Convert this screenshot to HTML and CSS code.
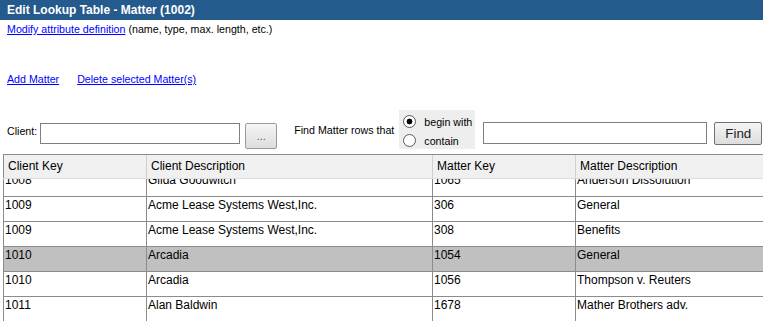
FILE: index.html
```html
<!DOCTYPE html>
<html lang="en">
<head>
  <meta charset="UTF-8">
  <title>Edit Lookup Table - Matter (1002)</title>
  <link rel="stylesheet" href="styles.css">
</head>
<body>
  <div class="title-bar">Edit Lookup Table - Matter (1002)</div>
  <div class="attr-line"><a href="#">Modify attribute definition</a> (name, type, max. length, etc.)</div>
  <div class="actions">
    <a href="#">Add Matter</a>
    <a href="#">Delete selected Matter(s)</a>
  </div>

  <div class="search-bar">
    <label class="client-label" for="client">Client:</label>
    <input type="text" id="client" class="client-input">
    <button class="browse-btn">...</button>
    <span class="find-label">Find Matter rows that</span>
    <div class="match-mode">
      <label><input type="radio" name="mode" checked><span>begin with</span></label>
      <label><input type="radio" name="mode"><span>contain</span></label>
    </div>
    <input type="text" class="find-input">
    <button class="find-btn">Find</button>
  </div>

  <!-- Lookup grid -->
  <div class="grid">
    <div class="grid-row grid-head">
      <div>Client Key</div>
      <div>Client Description</div>
      <div>Matter Key</div>
      <div>Matter Description</div>
    </div>
    <div class="grid-body">
      <div class="grid-rows">
        <div class="grid-row"><div>1008</div><div>Gilda Goodwitch</div><div>1065</div><div>Anderson Dissolution</div></div>
        <div class="grid-row"><div>1009</div><div>Acme Lease Systems West,Inc.</div><div>306</div><div>General</div></div>
        <div class="grid-row"><div>1009</div><div>Acme Lease Systems West,Inc.</div><div>308</div><div>Benefits</div></div>
        <div class="grid-row selected"><div>1010</div><div>Arcadia</div><div>1054</div><div>General</div></div>
        <div class="grid-row"><div>1010</div><div>Arcadia</div><div>1056</div><div>Thompson v. Reuters</div></div>
        <div class="grid-row"><div>1011</div><div>Alan Baldwin</div><div>1678</div><div>Mather Brothers adv.</div></div>
        <div class="grid-row"><div>1012</div><div>Baker &amp; Sons</div><div>1702</div><div>General</div></div>
      </div>
    </div>
  </div>
</body>
</html>
```

FILE: styles.css
```css
html, body {
  margin: 0;
  overflow: hidden;
}
body {
  font-family: "Liberation Sans", Arial, sans-serif;
  font-size: 10.67px;
  color: #000;
  background: #fff;
}
a {
  color: #0000ff;
}
.title-bar {
  height: 20px;
  line-height: 20px;
  padding-left: 7px;
  background: #255a8d;
  color: #fff;
  font-size: 12px;
  font-weight: bold;
}
.attr-line {
  margin-top: 3px;
  padding-left: 7px;
  line-height: 12px;
}
.actions {
  display: flex;
  gap: 18px;
  margin-top: 38px;
  padding-left: 7px;
  line-height: 12px;
}
.search-bar {
  display: flex;
  align-items: flex-start;
  height: 39px;
  margin-top: 25px;
}
.client-label {
  margin: 15px 0 0 7px;
  line-height: 12px;
}
.client-input, .find-input {
  box-sizing: border-box;
  border: 1px solid #7f7f7f;
  padding: 0 2px;
  font: inherit;
  background: #fff;
}
.client-input {
  width: 200px;
  height: 21px;
  margin: 13px 0 0 3px;
}
.find-input {
  width: 224px;
  height: 22px;
  margin: 12px 0 0 8px;
}
.browse-btn, .find-btn {
  box-sizing: border-box;
  padding: 0;
  border: 1px solid #9a9a9a;
  border-radius: 2px;
  background: linear-gradient(#f5f5f5, #dddddd);
  font-family: inherit;
  cursor: pointer;
}
.browse-btn {
  width: 32px;
  height: 26px;
  margin: 13px 0 0 5px;
  font-size: 10.67px;
  color: #555;
}
.find-btn {
  width: 48px;
  height: 23px;
  margin: 12px 0 0 7px;
  border-color: #707070;
  font-size: 13.33px;
  color: #222;
}
.find-label {
  margin: 14px 0 0 17px;
  line-height: 12px;
}
.match-mode {
  box-sizing: border-box;
  width: 76px;
  height: 39px;
  margin-left: 5px;
  padding: 2px 0 0 4px;
  background: #eeeeee;
}
.match-mode label {
  display: flex;
  align-items: center;
  gap: 8px;
  height: 19px;
}
.match-mode input {
  appearance: none;
  box-sizing: border-box;
  width: 13px;
  height: 13px;
  margin: 0;
  border: 1px solid #5a5a5a;
  border-radius: 50%;
  background: #fff;
}
.match-mode input:checked {
  background: radial-gradient(circle, #000 0 2.6px, #fff 3.2px);
}
.grid {
  width: 900px;
  margin: 5px 0 0 3px;
}
.grid-row {
  display: grid;
  grid-template-columns: 144px 286px 143px 327px;
  font-size: 12px;
}
.grid-head {
  box-sizing: border-box;
  height: 25px;
  line-height: 23px;
  border-top: 1px solid #8c8c8c;
  border-bottom: 1px solid #dddddd;
  background: #f0f0f0;
}
.grid-head div {
  padding-left: 4px;
  border-right: 1px solid #d0d0d0;
}
.grid-head div:first-child {
  border-left: 1px solid #8c8c8c;
}
.grid-body {
  height: 142px;
  overflow: hidden;
}
.grid-rows {
  margin-top: -7px;
}
.grid-rows .grid-row {
  box-sizing: border-box;
  height: 25px;
  line-height: 14px;
  border-bottom: 1px solid #8c8c8c;
}
.grid-rows .grid-row div {
  padding: 1px 0 0 1px;
  border-right: 1px solid #8c8c8c;
  white-space: nowrap;
}
.grid-rows .grid-row div:first-child {
  border-left: 1px solid #8c8c8c;
}
.grid-row.selected {
  background: #c0c0c0;
}
```
